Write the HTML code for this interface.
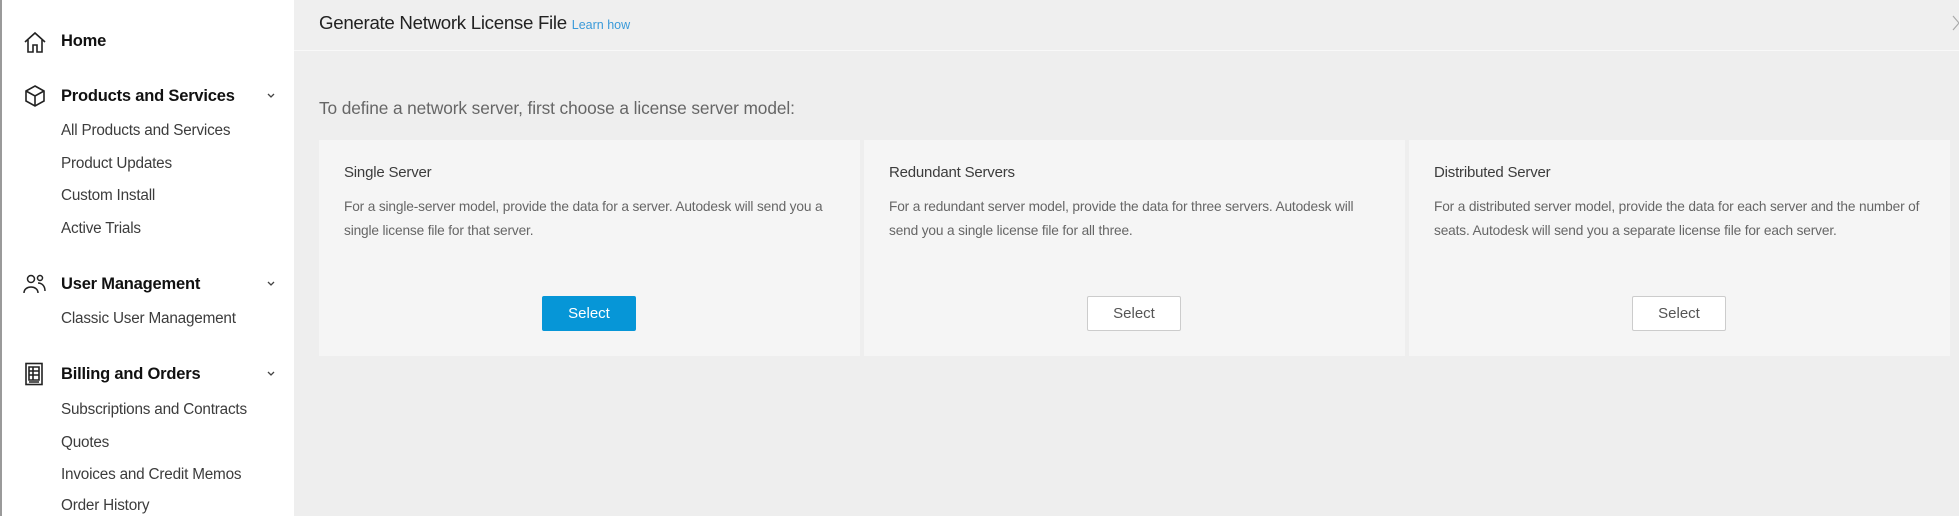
<!DOCTYPE html>
<html><head><meta charset="utf-8"><style>
*{margin:0;padding:0;box-sizing:border-box}
body{width:1959px;height:516px;overflow:hidden;background:#eeeeee;font-family:"Liberation Sans",sans-serif;position:relative}
#side{position:absolute;left:0;top:0;width:294px;height:516px;background:#fff;border-left:2px solid #9a9a9a}
.h{position:absolute;left:59px;font-weight:bold;font-size:16.5px;color:#111;letter-spacing:-0.2px;line-height:20px}
.s{position:absolute;left:59px;font-size:15.3px;color:#3c3c3c;letter-spacing:-0.2px;line-height:18px}
.chev{position:absolute;left:264px;width:10px;height:10px}
.ic{position:absolute;left:21px;width:24px;height:24px}
#hdr{position:absolute;left:294px;top:0;width:1665px;height:51px;border-bottom:1px solid #f8f8f8;background:#efefef;overflow:hidden}
.t{position:absolute;left:25px;top:12px;font-size:18.7px;color:#222;letter-spacing:-0.3px}
.t span{font-size:12.5px;color:#3a9ad9;letter-spacing:0}
.card{position:absolute;top:140px;width:541px;height:216px;background:#f5f5f5}
.ct{position:absolute;left:25px;top:24px;font-size:15px;color:#3c3c3c;letter-spacing:-0.2px}
.cd{position:absolute;left:25px;top:55px;font-size:13.7px;color:#666;line-height:24px;white-space:nowrap;letter-spacing:-0.15px}
.btn{position:absolute;top:156px;left:223px;width:94px;height:35px;border:1px solid #ccc;background:#fff;border-radius:2px;color:#555;font-size:15px;text-align:center;line-height:33px}
.btn.b{background:#0696d7;border-color:#0696d7;color:#fff}
</style></head><body>
<div id="side">
<svg class="ic" style="top:30px" viewBox="0 0 24 24" fill="none" stroke="#222" stroke-width="1.6"><path d="M2 12 L12 3 L22 12"/><path d="M5 10 V22 H10 V15 H14 V22 H19 V10"/></svg>
<div class="h" style="top:31px">Home</div>
<svg class="ic" style="top:84px" viewBox="0 0 24 24" fill="none" stroke="#222" stroke-width="1.6"><path d="M12 2 L21 7 V17 L12 22 L3 17 V7 Z"/><path d="M3 7 L12 12 L21 7 M12 12 V22"/></svg>
<div class="h" style="top:86px">Products and Services</div>
<svg class="chev" style="top:91px" viewBox="0 0 10 10" fill="none" stroke="#444" stroke-width="1.3"><path d="M2 3 L5 6 L8 3"/></svg>
<div class="s" style="top:122px">All Products and Services</div>
<div class="s" style="top:155px">Product Updates</div>
<div class="s" style="top:187px">Custom Install</div>
<div class="s" style="top:220px">Active Trials</div>
<svg class="ic" style="top:272px" viewBox="0 0 24 24" fill="none" stroke="#222" stroke-width="1.5"><circle cx="8" cy="7" r="3.5"/><circle cx="17" cy="6" r="2.5"/><path d="M1 21 C1 13 15 13 15 21"/><path d="M15 11 C19 11 22 14 22 19"/></svg>
<div class="h" style="top:274px">User Management</div>
<svg class="chev" style="top:279px" viewBox="0 0 10 10" fill="none" stroke="#444" stroke-width="1.3"><path d="M2 3 L5 6 L8 3"/></svg>
<div class="s" style="top:310px">Classic User Management</div>
<svg class="ic" style="top:362px" viewBox="0 0 24 24" fill="none" stroke="#222" stroke-width="1.6"><rect x="3" y="1.5" width="16" height="21"/><path d="M6 5 H16 V18 H6 Z M6 9 H16 M6 13 H16 M10 5 V18 M6 20 H16"/></svg>
<div class="h" style="top:364px">Billing and Orders</div>
<svg class="chev" style="top:369px" viewBox="0 0 10 10" fill="none" stroke="#444" stroke-width="1.3"><path d="M2 3 L5 6 L8 3"/></svg>
<div class="s" style="top:401px">Subscriptions and Contracts</div>
<div class="s" style="top:434px">Quotes</div>
<div class="s" style="top:466px">Invoices and Credit Memos</div>
<div class="s" style="top:497px">Order History</div>
</div>
<div id="hdr"><div class="t">Generate Network License File <span>Learn how</span></div>
<svg style="position:absolute;left:1658px;top:15px" width="14" height="16" viewBox="0 0 14 16" fill="none" stroke="#aaa" stroke-width="1.2"><path d="M1 1 L13 15 M13 1 L1 15"/></svg></div>
<div style="position:absolute;left:319px;top:98px;font-size:17.3px;color:#666;letter-spacing:-0.1px">To define a network server, first choose a license server model:</div>
<div class="card" style="left:319px"><div class="ct">Single Server</div><div class="cd">For a single-server model, provide the data for a server. Autodesk will send you a<br>single license file for that server.</div><div class="btn b">Select</div></div>
<div class="card" style="left:864px"><div class="ct">Redundant Servers</div><div class="cd">For a redundant server model, provide the data for three servers. Autodesk will<br>send you a single license file for all three.</div><div class="btn">Select</div></div>
<div class="card" style="left:1409px"><div class="ct">Distributed Server</div><div class="cd">For a distributed server model, provide the data for each server and the number of<br>seats. Autodesk will send you a separate license file for each server.</div><div class="btn">Select</div></div>
</body></html>
